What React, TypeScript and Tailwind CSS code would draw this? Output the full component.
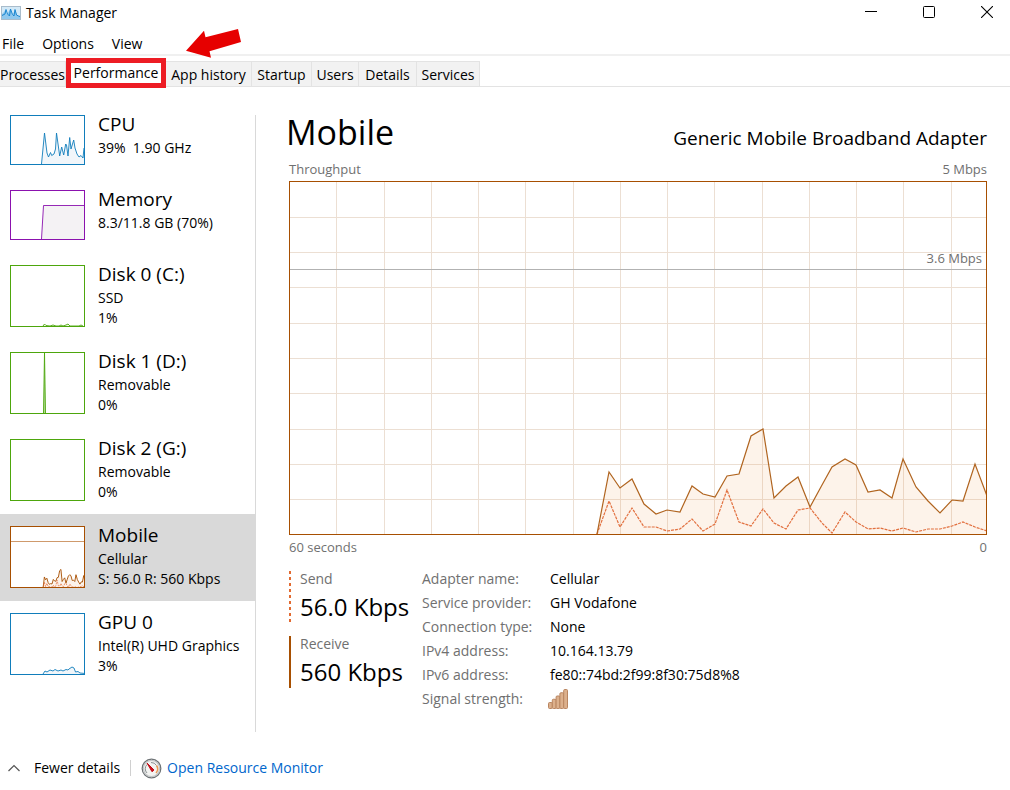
type Point = [number, number];

const RECEIVE: Point[] = [
  [308, 353], [320, 291], [331, 307], [343, 298], [355, 323], [367, 333], [378, 329], [391, 331],
  [403, 305], [414, 313], [426, 316], [438, 295], [450, 293], [462, 255], [474, 248], [485, 317],
  [497, 305], [509, 296], [521, 326], [533, 304], [543, 286], [556, 278], [567, 284], [579, 311],
  [591, 309], [603, 317], [614, 278], [627, 306], [639, 320], [651, 332], [663, 319], [674, 320],
  [686, 283], [698, 315],
];

const SEND: Point[] = [
  [308, 353], [320, 320], [331, 346], [343, 327], [355, 346], [367, 346], [378, 350], [391, 348],
  [403, 338], [414, 350], [426, 343], [438, 309], [450, 341], [462, 345], [474, 328], [485, 342],
  [497, 348], [509, 329], [521, 327], [533, 342], [543, 352], [556, 331], [567, 341], [579, 348],
  [591, 347], [603, 350], [614, 347], [627, 351], [639, 348], [651, 348], [663, 345], [674, 341],
  [686, 346], [698, 350],
];

const CPU: Point[] = [
  [31.5, 49], [34.5, 18], [37, 38], [38.5, 42], [40.5, 37.5], [41.7, 40.5], [44, 39], [45.5, 34],
  [46.5, 18], [49.7, 41], [51.7, 32], [53.7, 40], [55.7, 29], [56.5, 30], [58, 41], [59.7, 22.5],
  [61, 34], [63.7, 25], [65, 33], [67, 39], [69, 42], [71, 40.5], [73, 43], [74, 33],
];
const MEMORY: Point[] = [[31.5, 49], [33.5, 15.5], [75, 15.5]];
const DISK0: Point[] = [
  [33, 61], [34.5, 59], [36, 60.5], [40, 61], [43, 60], [46, 61], [49, 61], [51, 60], [53, 61],
  [56, 60], [58, 59], [60, 61], [69, 61], [71, 60], [73, 61],
];
const DISK1: Point[] = [[33.5, 61], [34.5, 1], [35.5, 61]];
const GPU: Point[] = [
  [33, 61], [35, 58], [37, 59], [40, 57], [43, 58], [45, 56.5], [48, 58], [51, 57], [53, 58],
  [56, 56.5], [58, 57], [59, 56], [62, 54], [64, 55], [65.5, 59], [68, 58.5], [70, 60], [75, 60.5],
];

const scale = (pts: Point[]): Point[] => pts.map(([x, y]) => [(x * 75) / 698, (y * 62) / 354]);
const toPoints = (pts: Point[]) => pts.map((p) => p.join(",")).join(" ");
const toArea = (pts: Point[], base: number) =>
  `${pts[0][0]},${base} ${toPoints(pts)} ${pts[pts.length - 1][0]},${base}`;

type Resource = {
  name: string;
  lines: string[];
  height: number;
  color: string;
  fill: string;
  points: Point[];
  dashed?: Point[];
  limit?: number;
  selected?: boolean;
};

const RESOURCES: Resource[] = [
  { name: "CPU", lines: ["39%  1.90 GHz"], height: 50, color: "#117dbb", fill: "#f1f6fa", points: CPU },
  { name: "Memory", lines: ["8.3/11.8 GB (70%)"], height: 50, color: "#8b12ae", fill: "#f4f2f4", points: MEMORY },
  { name: "Disk 0 (C:)", lines: ["SSD", "1%"], height: 62, color: "#4da60c", fill: "#eff7e9", points: DISK0 },
  { name: "Disk 1 (D:)", lines: ["Removable", "0%"], height: 62, color: "#4da60c", fill: "#b5dc96", points: DISK1 },
  { name: "Disk 2 (G:)", lines: ["Removable", "0%"], height: 62, color: "#4da60c", fill: "#ffffff", points: [] },
  {
    name: "Mobile", lines: ["Cellular", "S: 56.0 R: 560 Kbps"], height: 62, color: "#a74f01", fill: "#fcf3eb",
    points: scale(RECEIVE), dashed: scale(SEND), limit: 15.5, selected: true,
  },
  { name: "GPU 0", lines: ["Intel(R) UHD Graphics", "3%"], height: 62, color: "#117dbb", fill: "#f1f6fa", points: GPU },
];

function Thumbnail({ item }: { item: Resource }) {
  const h = item.height;
  return (
    <svg width="75" height={h} viewBox={`0 0 75 ${h}`} className="shrink-0" aria-hidden="true">
      <rect width="75" height={h} fill="#fff" />
      {item.points.length > 0 && (
        <>
          <polygon points={toArea(item.points, h - 1)} fill={item.fill} />
          <polyline points={toPoints(item.points)} fill="none" stroke={item.color} strokeWidth="1" opacity="0.9" />
        </>
      )}
      {item.dashed && (
        <polyline points={toPoints(item.dashed)} fill="none" stroke="#e26a35" strokeWidth="1" strokeDasharray="2 1" opacity="0.7" />
      )}
      {item.limit && <line x1="1" x2="74" y1={item.limit} y2={item.limit} stroke="#cf9a6c" />}
      <rect x="0.5" y="0.5" width="74" height={h - 1} fill="none" stroke={item.color} />
    </svg>
  );
}

function Sidebar() {
  return (
    <nav aria-label="Resources" className="flex w-[255px] shrink-0 flex-col">
      {RESOURCES.map((item) => (
        <button
          key={item.name}
          type="button"
          aria-current={item.selected ? "true" : undefined}
          className={`flex items-start gap-[13px] pt-3 pb-[13px] pl-2.5 text-left ${item.selected ? "bg-[#d9d9d9]" : ""}`}
        >
          <Thumbnail item={item} />
          <span className="-my-1 flex flex-col whitespace-pre">
            <span className="text-[19px] leading-[27px]">{item.name}</span>
            {item.lines.map((line) => (
              <span key={line} className="text-sm leading-5">{line}</span>
            ))}
          </span>
        </button>
      ))}
    </nav>
  );
}

const GRID_X = [47, 95, 142, 189, 236, 284, 331, 378, 425, 473, 520, 567, 614, 662];
const GRID_Y = [36, 71, 106, 142, 177, 212, 248, 283, 318];

function ThroughputChart() {
  return (
    <div className="relative">
      <svg viewBox="0 0 698 354" preserveAspectRatio="none" className="block h-[354px] w-full" role="img" aria-label="Throughput">
        <rect width="698" height="354" fill="#fff" />
        {GRID_X.map((x) => (
          <line key={x} x1={x + 0.5} x2={x + 0.5} y1="1" y2="353" stroke="#ecdfd3" />
        ))}
        {GRID_Y.map((y) => (
          <line key={y} x1="1" x2="697" y1={y + 0.5} y2={y + 0.5} stroke="#ecdfd3" />
        ))}
        <polygon points={toArea(RECEIVE, 353)} fill="#ef9a50" fillOpacity="0.12" />
        <line x1="1" x2="697" y1="88.5" y2="88.5" stroke="#b2b2b2" />
        <polyline points={toPoints(SEND)} fill="none" stroke="#e2703f" strokeDasharray="3 1" strokeWidth="1.2" />
        <polyline points={toPoints(RECEIVE)} fill="none" stroke="#b0641f" strokeWidth="1.2" />
        <rect x="0.5" y="0.5" width="697" height="353" fill="none" stroke="#a74f01" />
      </svg>
      <span className="absolute top-[67px] right-[5px] text-[13px] leading-5 text-[#707070]">3.6 Mbps</span>
    </div>
  );
}

function SignalIcon() {
  return (
    <svg width="20" height="20" viewBox="0 0 20 20" role="img" aria-label="Signal strength" className="-ml-0.5">
      {[0, 1, 2, 3, 4].map((i) => (
        <rect key={i} x={i * 3.8 + 0.5} y={13.5 - i * 3.25} width="3.8" height={6 + i * 3.25} rx="1" fill="#dcb08c" stroke="#b98560" />
      ))}
    </svg>
  );
}

const DETAILS: [string, string][] = [
  ["Adapter name:", "Cellular"],
  ["Service provider:", "GH Vodafone"],
  ["Connection type:", "None"],
  ["IPv4 address:", "10.164.13.79"],
  ["IPv6 address:", "fe80::74bd:2f99:8f30:75d8%8"],
  ["Signal strength:", ""],
];

function Main() {
  return (
    <main className="flex min-w-0 flex-1 flex-col pr-[23px] pl-[33px]">
      <header className="flex items-end justify-between pt-[7px]">
        <h1 className="-ml-[3px] text-[34px] leading-[44px]">Mobile</h1>
        <h2 className="pb-0.5 text-[19px] leading-7">Generic Mobile Broadband Adapter</h2>
      </header>
      <div className="flex justify-between pt-[5px] pb-0.5 text-[13px] leading-5 text-[#707070]">
        <span>Throughput</span>
        <span>5 Mbps</span>
      </div>
      <ThroughputChart />
      <div className="flex justify-between pt-0.5 text-[13px] leading-5 text-[#707070]">
        <span>60 seconds</span>
        <span>0</span>
      </div>
      <div className="flex pt-[10px]">
        <div className="flex w-[133px] shrink-0 flex-col gap-[13px] pt-1">
          <div className="flex h-[52px] gap-[9px]">
            <svg width="2" height="52" aria-hidden="true">
              <line x1="1" x2="1" y1="0" y2="52" stroke="#e26a30" strokeWidth="2" strokeDasharray="3 3" />
            </svg>
            <div className="whitespace-nowrap">
              <div className="-mt-0.5 text-sm leading-5 text-[#707070]">Send</div>
              <div className="text-2xl leading-9">56.0 Kbps</div>
            </div>
          </div>
          <div className="flex h-[52px] gap-[9px]">
            <div className="w-0.5 bg-[#a74f01]" />
            <div className="whitespace-nowrap">
              <div className="-mt-0.5 text-sm leading-5 text-[#707070]">Receive</div>
              <div className="text-2xl leading-9">560 Kbps</div>
            </div>
          </div>
        </div>
        <dl className="grid grid-cols-[128px_auto] text-sm leading-6">
          {DETAILS.map(([label, value]) => (
            <div key={label} className="col-span-2 grid grid-cols-subgrid items-center">
              <dt className="text-[#707070]">{label}</dt>
              <dd>{value || <SignalIcon />}</dd>
            </div>
          ))}
        </dl>
      </div>
    </main>
  );
}

function AppIcon() {
  return (
    <svg width="20" height="14" viewBox="0 0 20 14" aria-hidden="true">
      <rect x="0.5" y="0.5" width="19" height="13" fill="#d3e9f7" stroke="#a9bccb" />
      <path d="M1 12V8L3 6L4.500 3.500L6 9L8 5L9.500 3L11.500 9L13 6L14.500 4L16 9.500L19 10V13H1Z" fill="#8fc8ee" />
      <path d="M1 9.500L4 8L5 3.500L6.500 8L8.500 10L9.500 3L11.500 8.500L13 10L14 3.500L15.500 9L17.500 10L19 10.500" fill="none" stroke="#1a86d0" />
    </svg>
  );
}

function GaugeIcon() {
  return (
    <svg width="21" height="21" viewBox="0 0 21 21" aria-hidden="true">
      <circle cx="10.500" cy="10.500" r="9.300" fill="#f3f3f1" stroke="#6d7275" strokeWidth="1.300" />
      <circle cx="10.500" cy="10.500" r="8.100" fill="none" stroke="#c3c6c7" strokeWidth="1.200" />
      <path d="M6 15A6 6 0 0 1 6 6.500" fill="none" stroke="#8a9294" />
      <path d="M10 4.500A6 6 0 0 1 15.500 7.500" fill="none" stroke="#8a9294" />
      <path d="M15.500 7.500A6 6 0 0 1 15 15" fill="none" stroke="#e79a55" strokeWidth="1.500" />
      <path d="M6 5L13 12L11 13.700Z" fill="#d0101c" stroke="#c00d18" strokeLinejoin="round" />
    </svg>
  );
}

const TABS: { label: string; width: string }[] = [
  { label: "Processes", width: "w-[66px]" },
  { label: "Performance", width: "w-[100px]" },
  { label: "App history", width: "w-[86px]" },
  { label: "Startup", width: "w-[60px]" },
  { label: "Users", width: "w-[47px]" },
  { label: "Details", width: "w-[58px]" },
  { label: "Services", width: "w-[63px]" },
];

export default function App() {
  return (
    <div className="flex min-h-screen flex-col bg-white font-['Open_Sans','Noto_Sans',sans-serif] text-sm text-black">
      <div className="flex h-[26px] items-center justify-between">
        <div className="flex items-center gap-[5px] pl-px">
          <AppIcon />
          <span>Task Manager</span>
        </div>
        <div className="flex h-6 items-start gap-[46px] pt-[5px] pr-[17px]">
          <button type="button" aria-label="Minimize">
            <svg width="12" height="12" className="block"><path d="M0 5.500H12" stroke="#000" /></svg>
          </button>
          <button type="button" aria-label="Maximize">
            <svg width="12" height="12" className="block"><rect x="0.5" y="0.5" width="11" height="11" rx="1" fill="none" stroke="#000" /></svg>
          </button>
          <button type="button" aria-label="Close">
            <svg width="12" height="12" className="block"><path d="M0 0L12 12M12 0L0 12" stroke="#000" strokeWidth="1.100" /></svg>
          </button>
        </div>
      </div>

      <div className="relative flex h-[30px] items-center gap-[18px] border-b-2 border-[#f0f0f0] pt-2 pl-0.5">
        <button type="button">File</button>
        <button type="button">Options</button>
        <button type="button">View</button>
        <svg width="56" height="30" viewBox="0 0 56 30" className="absolute top-[2px] left-[186px]" aria-hidden="true">
          <path d="M0 22.700L18 2.700L19.500 9.300L52 1L55 14L23.500 23.300L25 29.700Z" fill="#e60000" />
        </svg>
      </div>

      <div role="tablist" className="mt-[5px] flex h-[26px] border-b border-[#e3e3e3]">
        {TABS.map(({ label, width }) =>
          label === "Performance" ? (
            <button key={label} type="button" role="tab" aria-selected="true" className={`relative ${width}`}>
              <span className="absolute inset-x-0 -top-[3px] flex h-[30px] items-center justify-center border-[5px] border-[#ed1c24] bg-white">
                {label}
              </span>
            </button>
          ) : (
            <button
              key={label}
              type="button"
              role="tab"
              aria-selected="false"
              className={`${width} flex items-center justify-center border-t border-r border-[#e3e3e3] bg-[#f2f2f2] pt-0.5 whitespace-nowrap`}
            >
              {label}
            </button>
          ),
        )}
      </div>

      <div className="mt-4 flex flex-1">
        <Sidebar />
        <div className="mt-3 w-px shrink-0 bg-[#d9d9d9]" />
        <Main />
      </div>

      <footer className="flex h-[58px] items-center pt-3.5 pl-2">
        <button type="button" className="flex items-center gap-[14px]">
          <svg width="12" height="8" viewBox="0 0 12 8" aria-hidden="true">
            <path d="M0.500 7L6 1.500L11.500 7" fill="none" stroke="#555" strokeWidth="1.200" />
          </svg>
          Fewer details
        </button>
        <div className="mx-2.5 h-4 w-px bg-[#d0d0d0]" />
        <a href="#resource-monitor" className="flex items-center gap-[5px] text-[#0066cc]">
          <GaugeIcon />
          Open Resource Monitor
        </a>
      </footer>
    </div>
  );
}
